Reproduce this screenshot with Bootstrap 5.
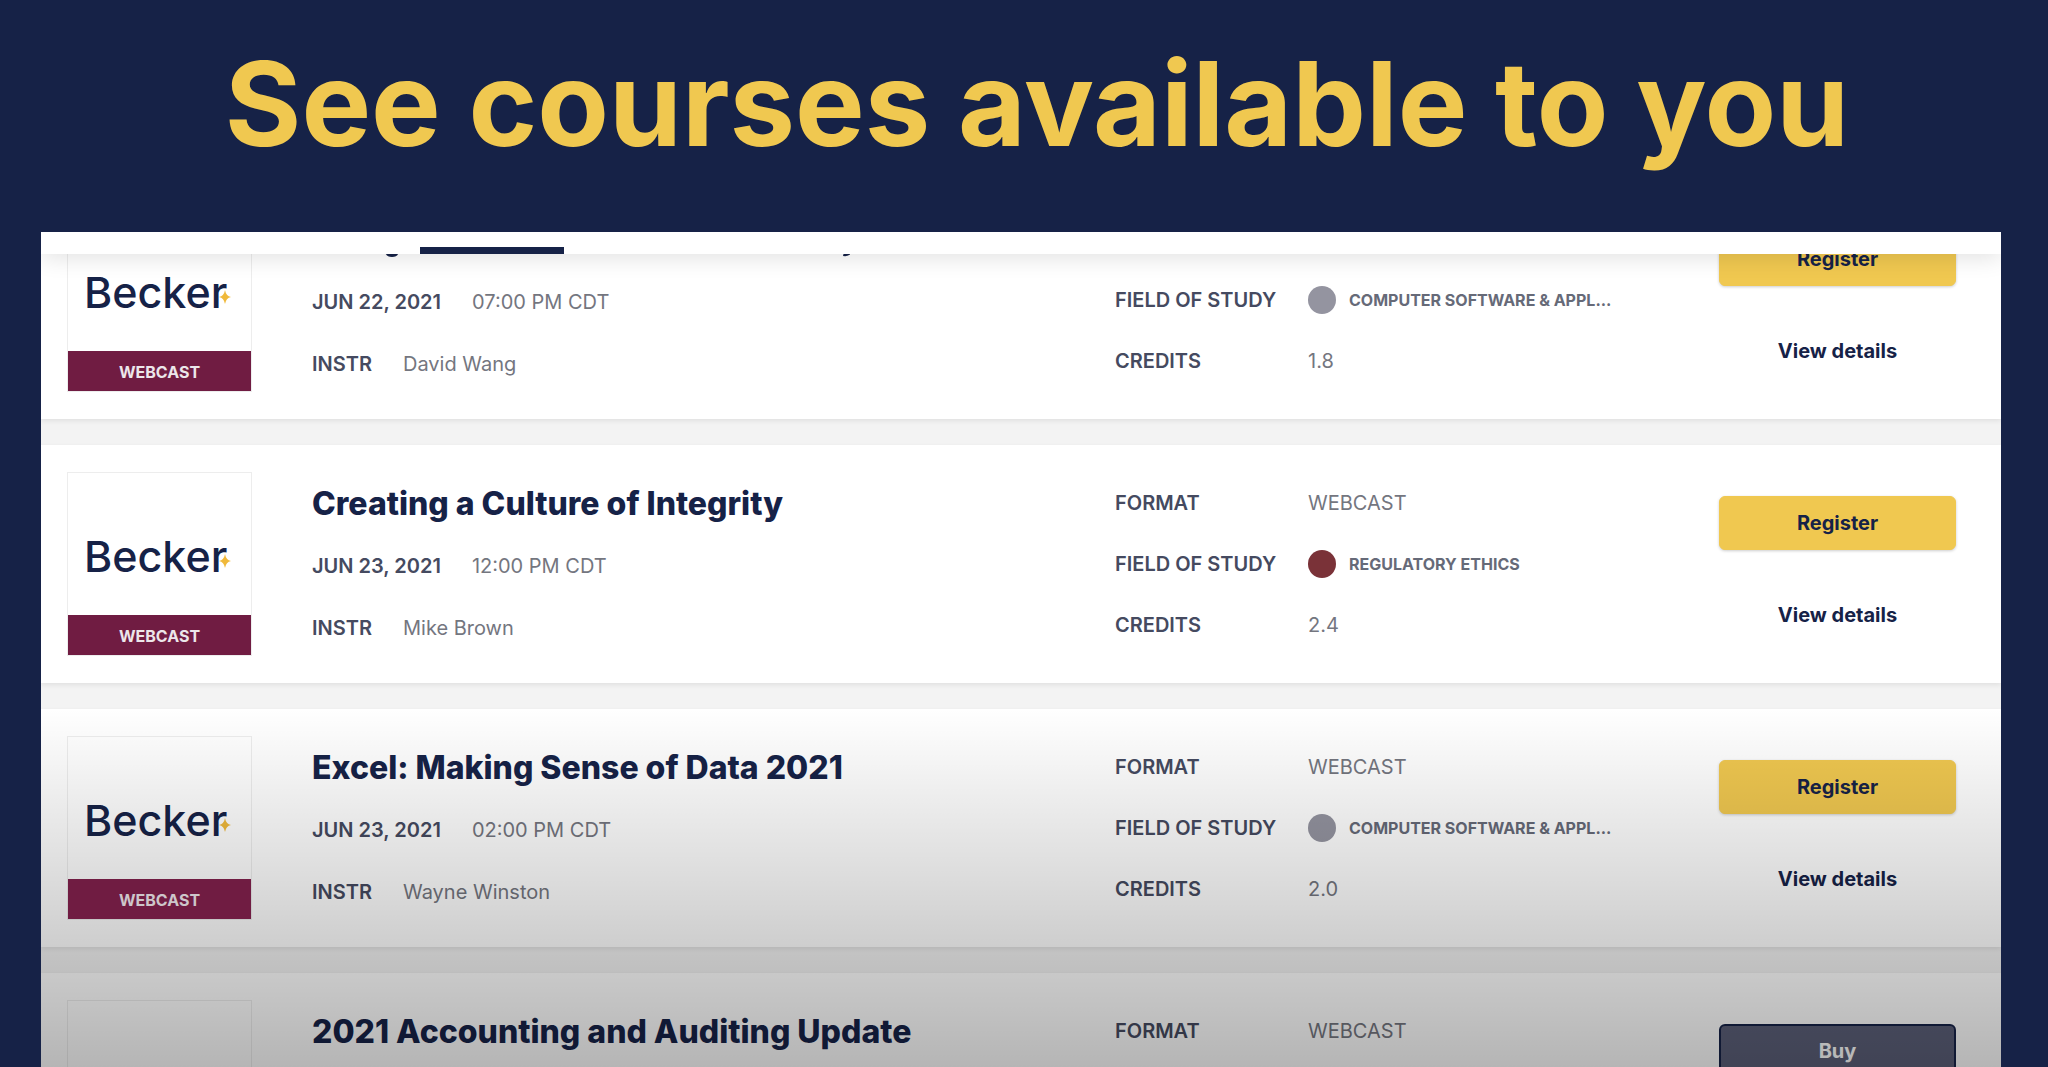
<!DOCTYPE html>
<html lang="en">
<head>
<meta charset="utf-8">
<meta name="viewport" content="width=device-width, initial-scale=1">
<title>See courses available to you</title>
<link href="https://cdn.jsdelivr.net/npm/bootstrap@5.3.0/dist/css/bootstrap.min.css" rel="stylesheet">
<style>
  :root { --navy: #162247; --gold: #f0c850; --plum: #701c42; --ink: #454a60; --soft: #74767f; }
  body { background: var(--navy); color: var(--navy); font-family: Inter, "Liberation Sans", sans-serif; font-size: 20px; }
  .promo-head { height: 232px; padding-left: 26px; padding-bottom: 24px; }
  .promo-head h1 { color: var(--gold); font-size: 117px; font-weight: 700; line-height: 120px; white-space: nowrap; }
  .panel { margin: 0 47px 0 41px; background: #f3f3f3; }
  .tab-strip { height: 22px; padding-left: 379px; background: #fff; box-shadow: 0 2px 24px rgba(0,0,0,.14); z-index: 2; }
  .tab-strip span { width: 144px; height: 7px; background: var(--navy); }
  .course-list { gap: 26px; margin-top: -73px; }
  .course { height: 238px; padding: 0 45px 0 26px; background: #fff; box-shadow: 0 2px 5px rgba(0,0,0,.08); }
  .tile { width: 185px; height: 184px; margin: 27px 60px 0 0; border: 1px solid rgba(0,0,0,.07); }
  .brand { font-size: 43px; font-weight: 500; line-height: 48px; padding: 24px 0 0 16px; }
  .brand svg { width: 12px; height: 16px; margin-left: -8px; }
  .kind { height: 40px; padding-top: 2px; background: var(--plum); color: #ece6ea; font-size: 16px; font-weight: 700; z-index: 4; }
  .kind.dim { color: #cdc6ca; }
  .info { padding-top: 28px; }
  .info .line { height: 62px; gap: 31px; }
  .info h2 { font-size: 32px; font-weight: 800; white-space: nowrap; }
  .facts { width: 604px; padding-top: 27px; }
  .facts .line { height: 61px; }
  dt, .key { font-weight: 600; color: var(--ink); }
  dt { width: 193px; }
  dd, .val { color: var(--soft); }
  .study { font-size: 16px; font-weight: 700; color: #666a78; gap: 13px; }
  .dot { width: 28px; height: 28px; background: #9494a0; }
  .dot.ethics { background: #7a3238; }
  .acts { width: 237px; padding-top: 51px; gap: 47px; }
  .acts .btn { height: 54px; border-radius: 6px; font-size: 20px; font-weight: 700; line-height: 32px; }
  .btn-gold, .btn-gold:hover { background: var(--gold); border-color: var(--gold); color: var(--navy); box-shadow: 0 1px 3px rgba(0,0,0,.2); }
  .btn-buy, .btn-buy:hover { background: #5b5f78; border: 2px solid var(--navy); color: #fff; }
  .acts a { color: var(--navy); font-weight: 700; line-height: 36px; }
  .shade { height: 358px; background: linear-gradient(rgba(0,0,0,0), rgba(0,0,0,.29)); z-index: 3; pointer-events: none; }
</style>
</head>
<body class="vh-100 d-flex flex-column overflow-hidden">
<header class="promo-head d-flex align-items-center justify-content-center flex-shrink-0">
  <h1 class="m-0">See courses available to you</h1>
</header>
<main class="panel position-relative flex-grow-1 d-flex flex-column overflow-hidden">
  <div class="tab-strip position-relative d-flex align-items-end flex-shrink-0"><span></span></div>
  <div class="course-list d-flex flex-column">

    <article class="course d-flex flex-shrink-0">
      <div class="tile d-flex flex-column flex-shrink-0">
        <div class="brand flex-grow-1 d-flex align-items-center"><div>Becker<svg viewBox="0 0 12 16" fill="#f0b93a" aria-hidden="true"><path d="M6 2Q7 8 12 9Q7 10 6 16Q5 10 0 9Q5 8 6 2Z"/></svg></div></div>
        <div class="kind position-relative d-flex align-items-center justify-content-center">WEBCAST</div>
      </div>
      <div class="info flex-grow-1">
        <div class="line"><svg width="540" height="62" fill="#162247" aria-hidden="true"><path d="M73 43H87Q86 48 80 48Q74 48 73 43ZM532 43H539Q538 48 531 47Z"/></svg></div>
        <div class="line d-flex align-items-center"><span class="key">JUN 22, 2021</span><span class="val">07:00 PM CDT</span></div>
        <div class="line d-flex align-items-center"><span class="key">INSTR</span><span class="val">David Wang</span></div>
      </div>
      <dl class="facts m-0 flex-shrink-0">
        <div class="line"></div>
        <div class="line d-flex align-items-center"><dt>FIELD OF STUDY</dt><dd class="study m-0 d-flex align-items-center"><span class="dot rounded-circle"></span>COMPUTER SOFTWARE &amp; APPL...</dd></div>
        <div class="line d-flex align-items-center"><dt>CREDITS</dt><dd class="m-0">1.8</dd></div>
      </dl>
      <div class="acts d-flex flex-column flex-shrink-0">
        <button type="button" class="btn btn-gold">Register</button>
        <a href="#" class="text-center text-decoration-none">View details</a>
      </div>
    </article>

    <article class="course d-flex flex-shrink-0">
      <div class="tile d-flex flex-column flex-shrink-0">
        <div class="brand flex-grow-1 d-flex align-items-center"><div>Becker<svg viewBox="0 0 12 16" fill="#f0b93a" aria-hidden="true"><path d="M6 2Q7 8 12 9Q7 10 6 16Q5 10 0 9Q5 8 6 2Z"/></svg></div></div>
        <div class="kind position-relative d-flex align-items-center justify-content-center">WEBCAST</div>
      </div>
      <div class="info flex-grow-1">
        <div class="line d-flex align-items-center"><h2 class="m-0">Creating a Culture of Integrity</h2></div>
        <div class="line d-flex align-items-center"><span class="key">JUN 23, 2021</span><span class="val">12:00 PM CDT</span></div>
        <div class="line d-flex align-items-center"><span class="key">INSTR</span><span class="val">Mike Brown</span></div>
      </div>
      <dl class="facts m-0 flex-shrink-0">
        <div class="line d-flex align-items-center"><dt>FORMAT</dt><dd class="m-0">WEBCAST</dd></div>
        <div class="line d-flex align-items-center"><dt>FIELD OF STUDY</dt><dd class="study m-0 d-flex align-items-center"><span class="dot ethics rounded-circle"></span>REGULATORY ETHICS</dd></div>
        <div class="line d-flex align-items-center"><dt>CREDITS</dt><dd class="m-0">2.4</dd></div>
      </dl>
      <div class="acts d-flex flex-column flex-shrink-0">
        <button type="button" class="btn btn-gold">Register</button>
        <a href="#" class="text-center text-decoration-none">View details</a>
      </div>
    </article>

    <article class="course d-flex flex-shrink-0">
      <div class="tile d-flex flex-column flex-shrink-0">
        <div class="brand flex-grow-1 d-flex align-items-center"><div>Becker<svg viewBox="0 0 12 16" fill="#f0b93a" aria-hidden="true"><path d="M6 2Q7 8 12 9Q7 10 6 16Q5 10 0 9Q5 8 6 2Z"/></svg></div></div>
        <div class="kind dim position-relative d-flex align-items-center justify-content-center">WEBCAST</div>
      </div>
      <div class="info flex-grow-1">
        <div class="line d-flex align-items-center"><h2 class="m-0">Excel: Making Sense of Data 2021</h2></div>
        <div class="line d-flex align-items-center"><span class="key">JUN 23, 2021</span><span class="val">02:00 PM CDT</span></div>
        <div class="line d-flex align-items-center"><span class="key">INSTR</span><span class="val">Wayne Winston</span></div>
      </div>
      <dl class="facts m-0 flex-shrink-0">
        <div class="line d-flex align-items-center"><dt>FORMAT</dt><dd class="m-0">WEBCAST</dd></div>
        <div class="line d-flex align-items-center"><dt>FIELD OF STUDY</dt><dd class="study m-0 d-flex align-items-center"><span class="dot rounded-circle"></span>COMPUTER SOFTWARE &amp; APPL...</dd></div>
        <div class="line d-flex align-items-center"><dt>CREDITS</dt><dd class="m-0">2.0</dd></div>
      </dl>
      <div class="acts d-flex flex-column flex-shrink-0">
        <button type="button" class="btn btn-gold">Register</button>
        <a href="#" class="text-center text-decoration-none">View details</a>
      </div>
    </article>

    <article class="course d-flex flex-shrink-0">
      <div class="tile flex-shrink-0"></div>
      <div class="info flex-grow-1">
        <div class="line d-flex align-items-center"><h2 class="m-0">2021 Accounting and Auditing Update</h2></div>
      </div>
      <dl class="facts m-0 flex-shrink-0">
        <div class="line d-flex align-items-center"><dt>FORMAT</dt><dd class="m-0">WEBCAST</dd></div>
      </dl>
      <div class="acts d-flex flex-column flex-shrink-0">
        <button type="button" class="btn btn-buy">Buy</button>
      </div>
    </article>
  </div>
  <div class="shade position-absolute bottom-0 start-0 w-100"></div>
</main>
<script src="https://cdn.jsdelivr.net/npm/bootstrap@5.3.0/dist/js/bootstrap.bundle.min.js"></script>
</body>
</html>
